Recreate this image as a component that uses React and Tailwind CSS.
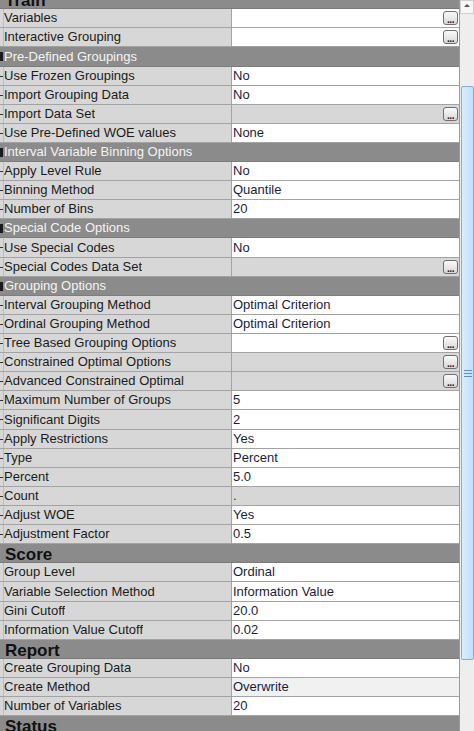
import React from "react";

const rows = [
  { t: "h", l: "Train" },
  { l: "Variables", btn: true },
  { l: "Interactive Grouping", btn: true },
  { t: "s", l: "Pre-Defined Groupings" },
  { l: "Use Frozen Groupings", v: "No", d: true },
  { l: "Import Grouping Data", v: "No", d: true },
  { l: "Import Data Set", btn: true, g: true, d: true },
  { l: "Use Pre-Defined WOE values", v: "None", d: true },
  { t: "s", l: "Interval Variable Binning Options" },
  { l: "Apply Level Rule", v: "No", d: true },
  { l: "Binning Method", v: "Quantile", d: true },
  { l: "Number of Bins", v: "20", d: true },
  { t: "s", l: "Special Code Options" },
  { l: "Use Special Codes", v: "No", d: true },
  { l: "Special Codes Data Set", btn: true, g: true, d: true },
  { t: "s", l: "Grouping Options" },
  { l: "Interval Grouping Method", v: "Optimal Criterion", d: true },
  { l: "Ordinal Grouping Method", v: "Optimal Criterion", d: true },
  { l: "Tree Based Grouping Options", btn: true, d: true },
  { l: "Constrained Optimal Options", btn: true, g: true, d: true },
  { l: "Advanced Constrained Optimal", btn: true, g: true, d: true },
  { l: "Maximum Number of Groups", v: "5", d: true },
  { l: "Significant Digits", v: "2", d: true },
  { l: "Apply Restrictions", v: "Yes", d: true },
  { l: "Type", v: "Percent", d: true },
  { l: "Percent", v: "5.0", d: true },
  { l: "Count", v: ".", g: true, d: true },
  { l: "Adjust WOE", v: "Yes", d: true },
  { l: "Adjustment Factor", v: "0.5", d: true },
  { t: "h", l: "Score" },
  { l: "Group Level", v: "Ordinal" },
  { l: "Variable Selection Method", v: "Information Value" },
  { l: "Gini Cutoff", v: "20.0" },
  { l: "Information Value Cutoff", v: "0.02" },
  { t: "h", l: "Report" },
  { l: "Create Grouping Data", v: "No" },
  { l: "Create Method", v: "Overwrite", g2: true },
  { l: "Number of Variables", v: "20" },
  { t: "h", l: "Status" },
];

const tallRows = [3, 13, 22, 31];

function EllipsisBtn() {
  return (
    <div className="mr-[1px] flex h-[14px] w-[15px] items-end justify-center rounded-[3px] border border-[#6f6f6f] bg-gradient-to-b from-[#fafafa] to-[#d8d8d8] pb-[1px]">
      <span className="text-[10px] font-bold leading-[6px] tracking-[-0.5px] text-[#202020]">...</span>
    </div>
  );
}

function Row({ r, tall }) {
  const h = tall ? "h-[20px]" : "h-[19px]";
  if (r.t === "h") {
    return (
      <div className={"flex items-end border-b border-[#7a7a7a] bg-[#8b8b8b] pl-[5px] " + h}>
        <span className="translate-y-[2px] text-[17px] font-bold leading-[19px] text-[#111111]">{r.l}</span>
      </div>
    );
  }
  if (r.t === "s") {
    return (
      <div className={"flex items-center border-b border-[#7d7d7d] bg-[#8b8b8b] " + h}>
        <div className="flex h-full w-[4px] items-center">
          <div className="h-[9px] w-[3px] bg-[#1a1a1a]" />
        </div>
        <span className="text-[13px] leading-[18px] text-[#f4f4f4]">{r.l}</span>
      </div>
    );
  }
  return (
    <div className={"flex border-b border-[#a3a3a3] " + h}>
      <div className="flex w-[232px] items-center border-r border-[#a3a3a3] bg-[#d7d7d7]">
        <div className="flex h-full w-[4px] items-center border-r border-[#bdbdbd]">
          {r.d ? <div className="h-[1px] w-[3px] bg-[#333333]" /> : null}
        </div>
        <span className="truncate text-[13px] leading-[18px] text-[#1b1b1b]">{r.l}</span>
      </div>
      <div
        className={
          "flex flex-1 items-center justify-between pl-[1px] " +
          (r.g ? "bg-[#d7d7d7]" : r.g2 ? "bg-[#f1f1f1]" : "bg-white")
        }
      >
        <span className="text-[13px] leading-[18px] text-[#1c1c3a]">{r.v || ""}</span>
        {r.btn ? <EllipsisBtn /> : null}
      </div>
    </div>
  );
}

export default function App() {
  return (
    <div
      className="flex h-[731px] w-[474px] overflow-hidden bg-white"
      style={{ fontFamily: '"Liberation Sans", Arial, sans-serif' }}
    >
      <div className="w-[460px] overflow-hidden border-r border-[#9a9a9a]">
        <div className="-mt-[10px]">
          {rows.map((r, i) => (
            <Row key={i} r={r} tall={tallRows.includes(i)} />
          ))}
        </div>
      </div>
      <div className="relative flex w-[14px] flex-col bg-[#eeeeee]">
        <div className="flex h-[14px] items-start justify-center border border-[#cfcfcf] bg-[#f7f7f7] pt-[2px]">
          <svg width="6" height="4" viewBox="0 0 6 4">
            <path d="M0 4 L3 1 L6 4 Z" fill="#555" />
          </svg>
        </div>
        <div className="ml-[1px] mt-[72px] flex h-[574px] items-center justify-center rounded-[2px] border border-[#7fb0d8] bg-gradient-to-r from-[#d8eefc] to-[#bfe0f7]">
          <div className="flex flex-col gap-[2px]">
            <div className="h-[1px] w-[8px] bg-[#5b8fb8]" />
            <div className="h-[1px] w-[8px] bg-[#5b8fb8]" />
            <div className="h-[1px] w-[8px] bg-[#5b8fb8]" />
          </div>
        </div>
      </div>
    </div>
  );
}
